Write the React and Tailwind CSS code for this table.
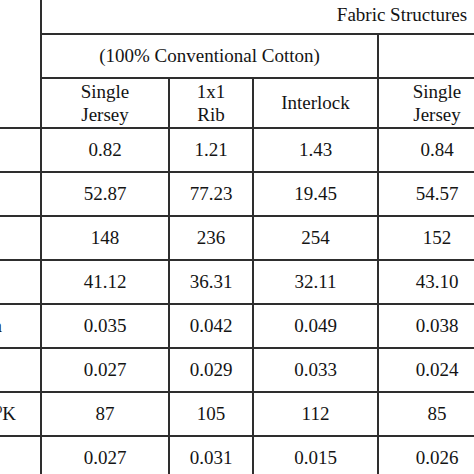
import React from 'react';

const rows = [
  { side: null, values: ['0.82', '1.21', '1.43', '0.84'] },
  { side: null, values: ['52.87', '77.23', '19.45', '54.57'] },
  { side: null, values: ['148', '236', '254', '152'] },
  { side: null, values: ['41.12', '36.31', '32.11', '43.10'] },
  { side: 'm', values: ['0.035', '0.042', '0.049', '0.038'] },
  { side: null, values: ['0.027', '0.029', '0.033', '0.024'] },
  { side: 'k', values: ['87', '105', '112', '85'] },
  { side: null, values: ['0.027', '0.031', '0.015', '0.026'] },
];

const line = 'border-[#2e2e2e]';

const SideLabel = ({ kind }) => {
  if (kind === 'm') {
    return <span className="pr-[38px]">(W/m</span>;
  }
  if (kind === 'k') {
    return (
      <span className="pr-[24px]">
        W/m<sup>2o</sup>K
      </span>
    );
  }
  return null;
};

const App = () => {
  return (
    <div className="w-[474px] h-[474px] overflow-hidden bg-white text-[#141414] font-['Liberation_Serif',serif] text-[19px]">
      <div className="grid w-[762px] grid-cols-[40px_128px_84px_125px_118px_267px] grid-rows-[35px_44px_50px_repeat(8,44px)]">
        {/* stub header */}
        <div className={`row-span-3 border-b-2 ${line}`} />

        {/* top spanning header */}
        <div className={`col-span-5 border-l-2 border-b-2 ${line} flex justify-center pt-[1px] whitespace-nowrap`}>
          Fabric Structures
        </div>

        {/* group headers */}
        <div className={`col-span-3 border-l-2 border-b-2 ${line} flex items-center justify-center whitespace-nowrap`}>
          (100% Conventional Cotton)
        </div>
        <div className={`col-span-2 border-l-2 border-b-2 ${line}`} />

        {/* structure headers */}
        <div className={`border-l-2 border-b-2 ${line} flex items-center justify-center text-center leading-[23px]`}>
          Single
          <br />
          Jersey
        </div>
        <div className={`border-l-2 border-b-2 ${line} flex items-center justify-center text-center leading-[23px]`}>
          1x1
          <br />
          Rib
        </div>
        <div className={`border-l-2 border-b-2 ${line} flex items-center justify-center`}>
          Interlock
        </div>
        <div className={`border-l-2 border-b-2 ${line} flex items-center justify-center text-center leading-[23px]`}>
          Single
          <br />
          Jersey
        </div>
        <div className={`border-l-2 border-b-2 ${line}`} />

        {rows.map((row, i) => (
          <React.Fragment key={i}>
            <div className={`border-b-2 ${line} flex items-center justify-end whitespace-nowrap overflow-visible`}>
              <SideLabel kind={row.side} />
            </div>
            {row.values.map((v, j) => (
              <div key={j} className={`border-l-2 border-b-2 ${line} flex items-center justify-center`}>
                {v}
              </div>
            ))}
            <div className={`border-l-2 border-b-2 ${line}`} />
          </React.Fragment>
        ))}
      </div>
    </div>
  );
};

export default App;
